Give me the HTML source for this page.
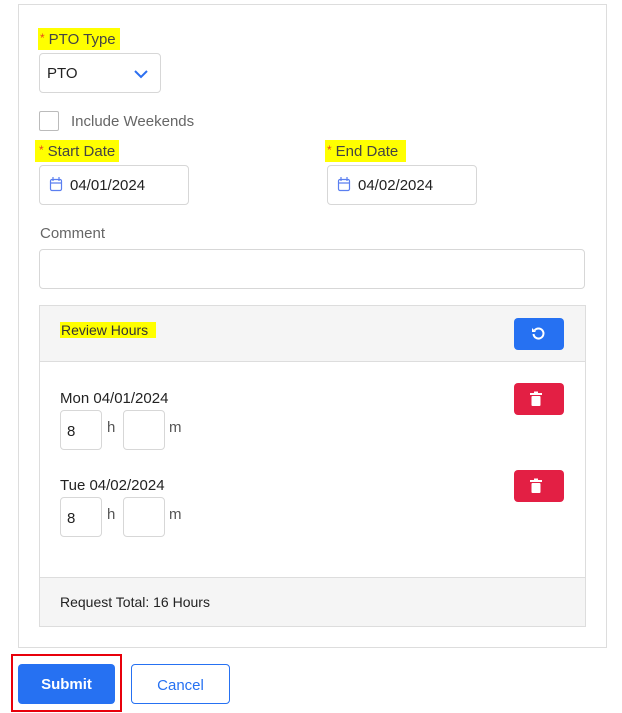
<!DOCTYPE html>
<html><head><style>
*{box-sizing:border-box;margin:0;padding:0}
body{width:622px;height:713px;background:#fff;font-family:"Liberation Sans",sans-serif;position:relative;color:#333;overflow:hidden}
.a{position:absolute}
.card{left:18px;top:4px;width:589px;height:644px;border:1px solid #ddd}
.lbl{font-size:15px;color:#444;background:#ffff00;padding:1px 4px 1px 2px;line-height:18px}
.lbl .s{color:#e84a1a;font-size:12px;vertical-align:2px;margin-right:4px}
.inp{border:1px solid #d7d7d7;border-radius:4px;background:#fff}
.txt{font-size:15px;color:#222}
.btn{border-radius:4px}
</style></head><body>
<div class="a card"></div>
<div class="a lbl" style="left:38px;top:28px"><span class="s">*</span>PTO Type</div>
<div class="a inp" style="left:39px;top:53px;width:122px;height:40px"></div>
<div class="a txt" style="left:47px;top:65px">PTO</div>
<svg class="a" style="left:133px;top:68px" width="16" height="12"><path d="M2 3 L8 9 L14 3" stroke="#2c6ff0" stroke-width="2" fill="none"/></svg>
<div class="a" style="left:39px;top:111px;width:20px;height:20px;border:1px solid #bbb;border-radius:2px"></div>
<div class="a" style="left:71px;top:113px;font-size:15px;color:#666">Include Weekends</div>
<div class="a lbl" style="left:35px;top:140px;padding-left:4px"><span class="s">*</span>Start Date</div>
<div class="a lbl" style="left:325px;top:140px;padding-right:8px"><span class="s">*</span>End Date</div>
<div class="a inp" style="left:39px;top:165px;width:150px;height:40px"></div>
<div class="a inp" style="left:327px;top:165px;width:150px;height:40px"></div>
<svg class="a" style="left:49px;top:176px" width="14" height="16"><rect x="1.5" y="3.5" width="11" height="11" rx="1.5" fill="none" stroke="#5b7ff0" stroke-width="1.2"/><path d="M1.5 7h11M4 1v4M10 1v4" stroke="#5b7ff0" stroke-width="1.2"/></svg>
<svg class="a" style="left:337px;top:176px" width="14" height="16"><rect x="1.5" y="3.5" width="11" height="11" rx="1.5" fill="none" stroke="#5b7ff0" stroke-width="1.2"/><path d="M1.5 7h11M4 1v4M10 1v4" stroke="#5b7ff0" stroke-width="1.2"/></svg>
<div class="a txt" style="left:70px;top:177px">04/01/2024</div>
<div class="a txt" style="left:358px;top:177px">04/02/2024</div>
<div class="a" style="left:40px;top:225px;font-size:15px;color:#666">Comment</div>
<div class="a inp" style="left:39px;top:249px;width:546px;height:40px"></div>
<div class="a" style="left:39px;top:305px;width:547px;height:322px;border:1px solid #ddd"></div>
<div class="a" style="left:40px;top:306px;width:545px;height:56px;background:#f5f5f5;border-bottom:1px solid #ddd"></div>
<div class="a" style="left:60px;top:322px;background:#ffff00;padding:0 8px 0 1px;font-size:14px;line-height:16px;color:#333">Review Hours</div>
<div class="a btn" style="left:514px;top:318px;width:50px;height:32px;background:#2671f2"></div>
<svg class="a" style="left:530px;top:325px" width="16" height="16"><path d="M4.5 5.5 A5 5 0 1 1 3.5 9" stroke="#fff" stroke-width="2" fill="none"/><path d="M2 3 L2 7 L6 7 Z" fill="#fff"/></svg>
<div class="a txt" style="left:60px;top:390px">Mon 04/01/2024</div>
<div class="a inp" style="left:60px;top:410px;width:42px;height:40px"></div>
<div class="a txt" style="left:67px;top:423px">8</div>
<div class="a txt" style="left:107px;top:419px;color:#555">h</div>
<div class="a inp" style="left:123px;top:410px;width:42px;height:40px"></div>
<div class="a txt" style="left:169px;top:419px;color:#555">m</div>
<div class="a btn" style="left:514px;top:383px;width:50px;height:32px;background:#e31f44"></div>
<svg class="a" style="left:529px;top:391px" width="14" height="16"><rect x="1" y="2" width="12" height="2" fill="#fff"/><rect x="5" y="0.5" width="4" height="2" fill="#fff"/><rect x="2.5" y="5" width="9" height="10" rx="1" fill="#fff"/></svg>
<div class="a txt" style="left:60px;top:477px">Tue 04/02/2024</div>
<div class="a inp" style="left:60px;top:497px;width:42px;height:40px"></div>
<div class="a txt" style="left:67px;top:510px">8</div>
<div class="a txt" style="left:107px;top:506px;color:#555">h</div>
<div class="a inp" style="left:123px;top:497px;width:42px;height:40px"></div>
<div class="a txt" style="left:169px;top:506px;color:#555">m</div>
<div class="a btn" style="left:514px;top:470px;width:50px;height:32px;background:#e31f44"></div>
<svg class="a" style="left:529px;top:478px" width="14" height="16"><rect x="1" y="2" width="12" height="2" fill="#fff"/><rect x="5" y="0.5" width="4" height="2" fill="#fff"/><rect x="2.5" y="5" width="9" height="10" rx="1" fill="#fff"/></svg>
<div class="a" style="left:40px;top:577px;width:545px;height:49px;background:#f5f5f5;border-top:1px solid #ddd"></div>
<div class="a" style="left:60px;top:594px;font-size:14px;color:#222">Request Total: 16 Hours</div>
<div class="a" style="left:11px;top:654px;width:111px;height:58px;border:2px solid #e8000b"></div>
<div class="a btn" style="left:18px;top:664px;width:97px;height:40px;background:#2671f2;color:#fff;font-weight:bold;font-size:15px;text-align:center;line-height:42px">Submit</div>
<div class="a btn" style="left:131px;top:664px;width:99px;height:40px;border:1px solid #2671f2;color:#2671f2;font-size:15px;text-align:center;line-height:41px">Cancel</div>
</body></html>
